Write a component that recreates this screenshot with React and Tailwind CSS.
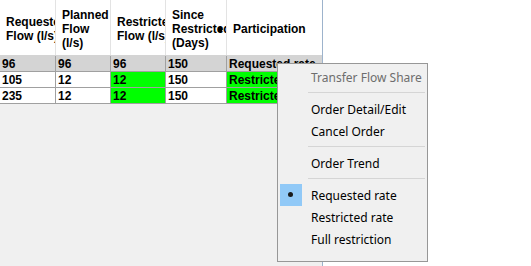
import React from "react";

const cols = "grid grid-cols-[56px_55px_55px_61px_95px]";

const rows = [
  { a: "96", b: "96", c: "96", d: "150", e: "Requested rate", gray: true },
  { a: "105", b: "12", c: "12", d: "150", e: "Restricted rate", green: true },
  { a: "235", b: "12", c: "12", d: "150", e: "Restricted rate", green: true },
];

const HeadCell = ({ lines, last }) => (
  <div
    className={
      "relative h-[55px] overflow-hidden bg-white pl-[6px] pt-[2px] flex flex-col justify-center " +
      (last ? "" : "border-r border-[#e3e3e3]")
    }
  >
    {lines.map((l, i) => (
      <div key={i} className="whitespace-nowrap leading-[14px]">
        {l}
      </div>
    ))}
  </div>
);

const Cell = ({ children, bg, last, first }) => (
  <div
    className={
      "overflow-hidden whitespace-nowrap pl-[2px] leading-[16px] border-b border-[#a0a0a0] " +
      (first ? "h-[16px] " : "h-[16px] ") +
      (last ? "" : "border-r ") +
      bg
    }
  >
    {children}
  </div>
);

const Item = ({ children, disabled, checked }) => (
  <div className="relative h-[22px] leading-[22px] pl-[33px]">
    {checked && (
      <div className="absolute left-[2px] top-[-1px] w-[22px] h-[22px] bg-[#91c9f7] flex items-center justify-center">
        <div className="w-[5px] h-[5px] rounded-full bg-[#1a1a1a] mt-[-2px] ml-[-1px]" />
      </div>
    )}
    <span className={disabled ? "text-[#6d6d6d]" : "text-black"}>{children}</span>
  </div>
);

const Sep = () => <div className="mt-[3px] mb-[6px] ml-[30px] mr-[2px] h-px bg-[#d5d5d5]" />;

export default function App() {
  return (
    <div className="relative w-[531px] h-[266px] bg-white overflow-hidden">
      <div className="w-[323px] h-[266px] bg-[#f0f0f0] border-r border-[#9db3cc] font-['Liberation_Sans',Arial,sans-serif] font-bold text-[12px] text-black">
        <div className={cols + " border-b border-[#d4d4d4]"}>
          <HeadCell lines={["Requested", "Flow (l/s)"]} />
          <HeadCell lines={["Planned", "Flow", "(l/s)"]} />
          <HeadCell lines={["Restricted", "Flow (l/s)"]} />
          <div className="relative">
            <HeadCell lines={["Since", "Restricted", "(Days)"]} />
            <span className="absolute left-[52px] top-[27px] w-[4px] h-[5px] bg-black" />
          </div>
          <HeadCell lines={["Participation"]} last />
        </div>
        {rows.map((r, i) => (
          <div key={i} className={cols}>
            <Cell bg={r.gray ? "bg-[#d4d4d4]" : "bg-white"}>{r.a}</Cell>
            <Cell bg={r.gray ? "bg-[#d4d4d4]" : "bg-white"}>{r.b}</Cell>
            <Cell bg={r.gray ? "bg-[#d4d4d4]" : "bg-[#00ff00]"}>{r.c}</Cell>
            <Cell bg={r.gray ? "bg-[#d4d4d4]" : "bg-white"}>{r.d}</Cell>
            <Cell bg={r.gray ? "bg-[#d4d4d4]" : "bg-[#00ff00]"} last>
              {r.e}
            </Cell>
          </div>
        ))}
      </div>

      <div className="absolute left-[277px] top-[63px] w-[151px] h-[199px] bg-[#f0f0f0] border border-[#979797] pt-[3px] font-['Noto_Sans',sans-serif] text-[12px]">
        <Item disabled>Transfer Flow Share</Item>
        <Sep />
        <Item>Order Detail/Edit</Item>
        <Item>Cancel Order</Item>
        <Sep />
        <Item>Order Trend</Item>
        <Sep />
        <Item checked>Requested rate</Item>
        <Item>Restricted rate</Item>
        <Item>Full restriction</Item>
      </div>
    </div>
  );
}
